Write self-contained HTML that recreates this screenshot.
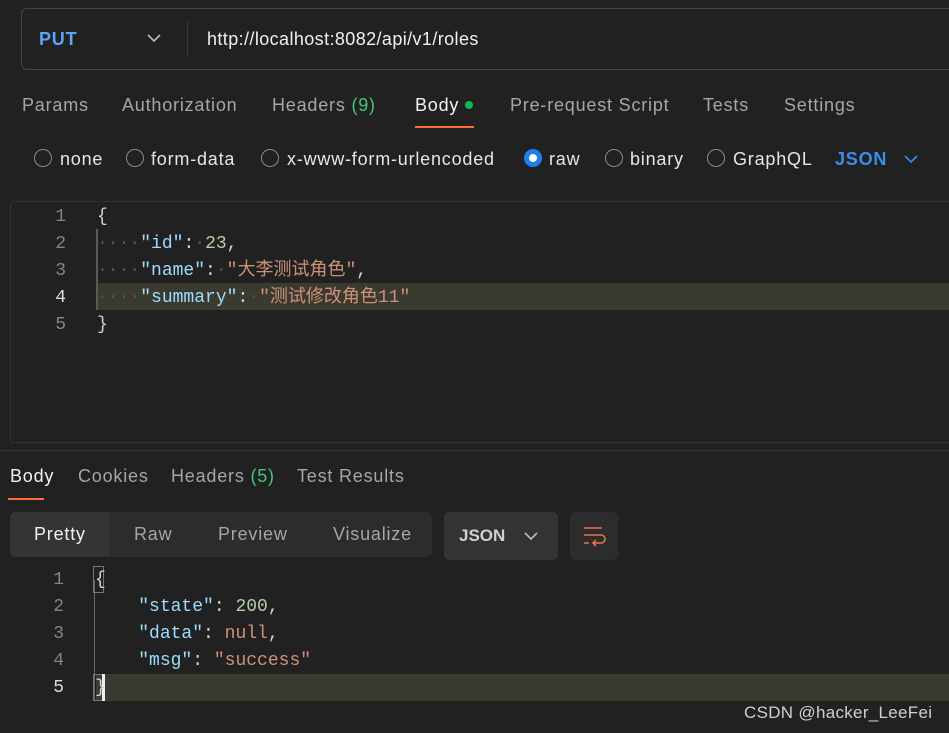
<!DOCTYPE html>
<html><head><meta charset="utf-8"><style>
*{margin:0;padding:0;box-sizing:border-box}
body{width:949px;height:733px;background:#212121;overflow:hidden;position:relative;font-family:"Liberation Sans","Noto Sans CJK SC",sans-serif;color:#e6e6e6}
.a{position:absolute;white-space:nowrap}
.ui{font-size:18px;letter-spacing:0.8px;margin-top:1px}
.g{color:#a6a6a6}
.mono{font-family:"Liberation Mono","Noto Sans CJK SC",monospace;font-size:18px}
.ln{color:#858585;width:20px;text-align:right}
.k{color:#9cdcfe}.s{color:#ce9178}.n{color:#b5cea8}.p{color:#d4d4d4}.d{color:#555}
.radio{position:absolute;width:18px;height:18px;border:1.5px solid #8a8a8a;border-radius:50%}
</style></head><body>
<div class="a" style="left:21px;top:8px;width:940px;height:62px;border:1px solid #444;border-radius:6px"></div>
<div class="a ui" style="left:39px;top:28px;color:#5aa3f5;font-weight:bold">PUT</div>
<svg class="a" style="left:146px;top:32px" width="16" height="12"><path d="M2 3l6 6 6-6" stroke="#bbb" fill="none" stroke-width="1.6"/></svg>
<div class="a" style="left:187px;top:21px;width:1px;height:36px;background:#3a3a3a"></div>
<div class="a ui" style="left:207px;top:28px;color:#f0f0f0;letter-spacing:0.4px">http://localhost:8082/api/v1/roles</div>

<div class="a ui g" style="left:22px;top:94px">Params</div>
<div class="a ui g" style="left:122px;top:94px">Authorization</div>
<div class="a ui g" style="left:272px;top:94px">Headers <span style="color:#49c47a">(9)</span></div>
<div class="a ui" style="left:415px;top:94px;color:#f2f2f2">Body</div>
<div class="a" style="left:465px;top:101px;width:8px;height:8px;border-radius:50%;background:#0cbb52"></div>
<div class="a" style="left:415px;top:126px;width:59px;height:2px;background:#ff6c37"></div>
<div class="a ui g" style="left:510px;top:94px">Pre-request Script</div>
<div class="a ui g" style="left:703px;top:94px">Tests</div>
<div class="a ui g" style="left:784px;top:94px">Settings</div>

<div class="radio" style="left:34px;top:149px"></div><div class="a ui" style="left:60px;top:148px">none</div>
<div class="radio" style="left:126px;top:149px"></div><div class="a ui" style="left:151px;top:148px">form-data</div>
<div class="radio" style="left:261px;top:149px"></div><div class="a ui" style="left:287px;top:148px">x-www-form-urlencoded</div>
<div class="radio" style="left:524px;top:149px;border:5px solid #1d7ff0;background:#fff"></div><div class="a ui" style="left:549px;top:148px">raw</div>
<div class="radio" style="left:605px;top:149px"></div><div class="a ui" style="left:630px;top:148px">binary</div>
<div class="radio" style="left:707px;top:149px"></div><div class="a ui" style="left:733px;top:148px">GraphQL</div>
<div class="a ui" style="left:835px;top:148px;color:#3b8cf2;font-weight:bold">JSON</div>
<svg class="a" style="left:903px;top:153px" width="16" height="12"><path d="M2 3l6 6 6-6" stroke="#3b8cf2" fill="none" stroke-width="1.6"/></svg>

<div class="a" style="left:10px;top:201px;width:960px;height:242px;border:1px solid #333;border-radius:4px"></div>
<div class="a" style="left:97px;top:283px;width:852px;height:27px;background:#3b3a30"></div>
<div class="a" style="left:96px;top:229px;width:2px;height:81px;background:#5a5a5a"></div>
<div class="a mono ln" style="left:46px;top:204px;line-height:27px;color:#858585">1<br>2<br>3<br><span style="color:#ddd">4</span><br>5</div>
<div class="a mono" style="left:97px;top:204px;line-height:27px"><span class="p">{</span><br><span class="d">····</span><span class="k">"id"</span><span class="p">:</span><span class="d">·</span><span class="n">23</span><span class="p">,</span><br><span class="d">····</span><span class="k">"name"</span><span class="p">:</span><span class="d">·</span><span class="s">"大李测试角色"</span><span class="p">,</span><br><span class="d">····</span><span class="k">"summary"</span><span class="p">:</span><span class="d">·</span><span class="s">"测试修改角色11"</span><br><span class="p">}</span></div>

<div class="a" style="left:0;top:450px;width:949px;height:1px;background:#333"></div>
<div class="a ui" style="left:10px;top:465px;color:#f2f2f2">Body</div>
<div class="a" style="left:8px;top:498px;width:36px;height:2px;background:#ff6c37"></div>
<div class="a ui g" style="left:78px;top:465px">Cookies</div>
<div class="a ui g" style="left:171px;top:465px">Headers <span style="color:#49c47a">(5)</span></div>
<div class="a ui g" style="left:297px;top:465px">Test Results</div>

<div class="a" style="left:10px;top:512px;width:422px;height:45px;background:#2c2c2c;border-radius:5px"></div>
<div class="a" style="left:10px;top:512px;width:100px;height:45px;background:#343434;border-radius:5px 0 0 5px"></div>
<div class="a ui" style="left:34px;top:523px;color:#f2f2f2">Pretty</div>
<div class="a ui g" style="left:134px;top:523px">Raw</div>
<div class="a ui g" style="left:218px;top:523px">Preview</div>
<div class="a ui g" style="left:333px;top:523px">Visualize</div>
<div class="a" style="left:444px;top:512px;width:114px;height:48px;background:#333;border-radius:5px"></div>
<div class="a" style="left:459px;top:526px;font-size:17px;font-weight:bold;color:#d0d0d0">JSON</div>
<svg class="a" style="left:523px;top:530px" width="16" height="12"><path d="M2 3l6 6 6-6" stroke="#bbb" fill="none" stroke-width="1.6"/></svg>
<div class="a" style="left:570px;top:512px;width:48px;height:48px;background:#2c2c2c;border-radius:5px"></div>
<svg class="a" style="left:582px;top:525px" width="24" height="22"><path d="M2 3h18M2 10h17a4 4 0 0 1 0 8h-7M14 15l-3 3 3 3M2 18h5" stroke="#e8714a" fill="none" stroke-width="1.6"/></svg>

<div class="a" style="left:96px;top:674px;width:853px;height:27px;background:#3b3a30"></div>
<div class="a" style="left:94px;top:580px;width:1px;height:120px;background:#666"></div>
<div class="a" style="left:93px;top:566px;width:11px;height:27px;border:1px solid #777"></div>
<div class="a" style="left:93px;top:674px;width:11px;height:27px;border:1px solid #777"></div>
<div class="a" style="left:102px;top:674px;width:3px;height:27px;background:#eee"></div>
<div class="a mono ln" style="left:44px;top:567px;line-height:27px">1<br>2<br>3<br>4<br><span style="color:#ddd">5</span></div>
<div class="a mono" style="left:95px;top:567px;line-height:27px"><span class="p">{</span><br>&nbsp;&nbsp;&nbsp;&nbsp;<span class="k">"state"</span><span class="p">: </span><span class="n">200</span><span class="p">,</span><br>&nbsp;&nbsp;&nbsp;&nbsp;<span class="k">"data"</span><span class="p">: </span><span class="s">null</span><span class="p">,</span><br>&nbsp;&nbsp;&nbsp;&nbsp;<span class="k">"msg"</span><span class="p">: </span><span class="s">"success"</span><br><span class="p">}</span></div>

<div class="a" style="left:744px;top:703px;font-size:17px;letter-spacing:0.3px;color:#cfcfcf">CSDN @hacker_LeeFei</div>
</body></html>
